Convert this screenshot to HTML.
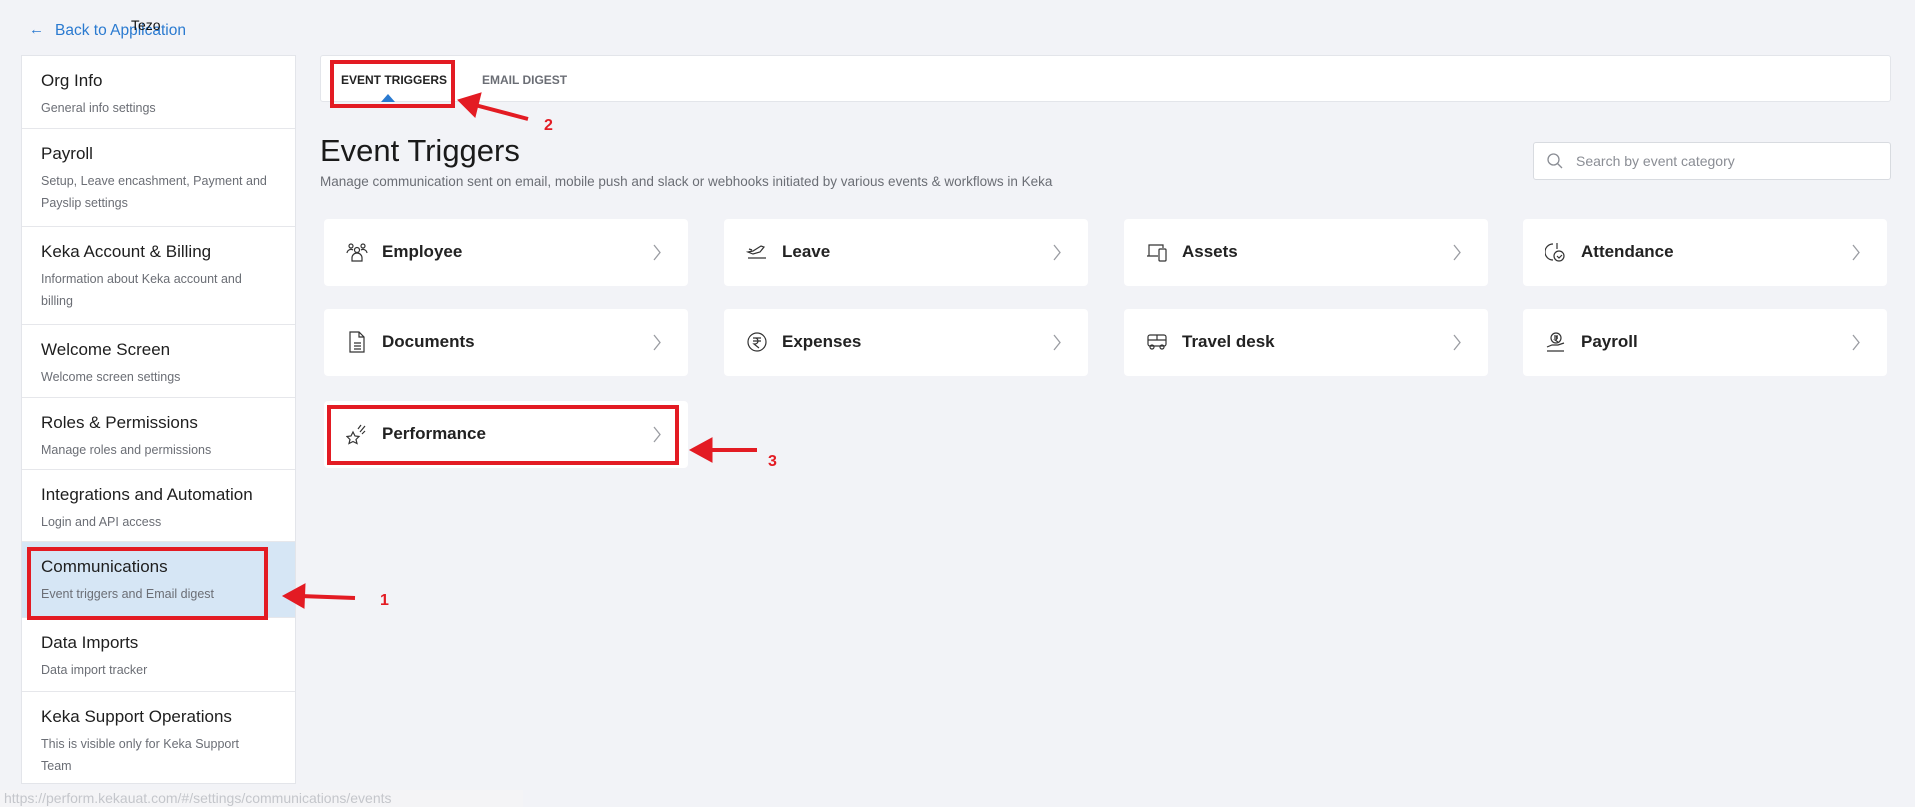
<!DOCTYPE html>
<html><head><meta charset="utf-8"><style>
*{box-sizing:border-box;margin:0;padding:0}
body{width:1915px;height:807px;background:#f2f3f7;font-family:"Liberation Sans",sans-serif;position:relative;overflow:hidden;color:#1f1f1f}
.abs{position:absolute}
.side{left:21px;top:55px;width:275px;height:729px;background:#fff;border:1px solid #e3e5ea}
.it{position:absolute;left:0;width:273px;border-bottom:1px solid #e6e7eb;padding:15px 0 0 19px}
.it .t{font-size:17px;color:#1e1e1e;line-height:20px}
.it .s{font-size:12.5px;color:#6b6e75;line-height:22px;margin-top:6px;width:228px}
.card{position:absolute;background:#fff;border-radius:4px;width:364px;height:67px}
.card .l{position:absolute;left:58px;top:23px;font-size:17px;font-weight:bold;color:#222}
.card .ic{position:absolute;left:22px;top:22px;width:22px;height:22px}
.card .ch{position:absolute;right:26px;top:25px}
.red{position:absolute;border:4px solid #e31b23}
.num{position:absolute;color:#e31b23;font-weight:bold;font-size:16px}
</style></head><body>
<div class="abs" style="left:29px;top:21px;color:#2a7ad0;font-size:15px">&#8592;</div>
<div class="abs" style="left:55px;top:22px;color:#2a7ad0;font-size:15.5px">Back to Application</div>
<div class="abs" style="left:131px;top:17px;color:#111;font-size:14px">Tezo</div>

<div class="abs side">
<div class="it" style="top:0;height:73px"><div class="t">Org Info</div><div class="s">General info settings</div></div>
<div class="it" style="top:73px;height:98px"><div class="t">Payroll</div><div class="s">Setup, Leave encashment, Payment and Payslip settings</div></div>
<div class="it" style="top:171px;height:98px"><div class="t">Keka Account &amp; Billing</div><div class="s">Information about Keka account and billing</div></div>
<div class="it" style="top:269px;height:73px"><div class="t">Welcome Screen</div><div class="s">Welcome screen settings</div></div>
<div class="it" style="top:342px;height:72px"><div class="t">Roles &amp; Permissions</div><div class="s">Manage roles and permissions</div></div>
<div class="it" style="top:414px;height:72px"><div class="t">Integrations and Automation</div><div class="s">Login and API access</div></div>
<div class="it" style="top:486px;height:76px;background:#d6e6f5"><div class="t">Communications</div><div class="s">Event triggers and Email digest</div></div>
<div class="it" style="top:562px;height:74px"><div class="t">Data Imports</div><div class="s">Data import tracker</div></div>
<div class="it" style="top:636px;height:92px;border:none"><div class="t">Keka Support Operations</div><div class="s">This is visible only for Keka Support Team</div></div>
</div>

<div class="abs" style="left:320px;top:55px;width:1571px;height:47px;background:#fff;border:1px solid #e3e5ea;border-radius:3px">
<div class="abs" style="left:20px;top:17px;font-size:12px;font-weight:bold;color:#222">EVENT TRIGGERS</div>
<div class="abs" style="left:161px;top:17px;font-size:12px;font-weight:bold;color:#6b6e75">EMAIL DIGEST</div>
<div class="abs" style="left:60px;top:38px;width:0;height:0;border-left:7px solid transparent;border-right:7px solid transparent;border-bottom:8px solid #2a7ad0"></div>
</div>

<div class="abs" style="left:320px;top:133px;font-size:31px;color:#1a1a1a">Event Triggers</div>
<div class="abs" style="left:320px;top:174px;font-size:13.5px;color:#6b6e75">Manage communication sent on email, mobile push and slack or webhooks initiated by various events &amp; workflows in Keka</div>

<div class="abs" style="left:1533px;top:142px;width:358px;height:38px;background:#fff;border:1px solid #d8dbe0;border-radius:3px">
<svg class="abs" style="left:12px;top:9px" width="18" height="18" viewBox="0 0 18 18" fill="none" stroke="#8a8d94" stroke-width="1.3"><circle cx="7.5" cy="7.5" r="5.5"/><path d="M11.5 11.5L16 16"/></svg>
<div class="abs" style="left:42px;top:10px;font-size:14px;color:#8a8d94">Search by event category</div>
</div>

<div class="card" style="left:324px;top:219px"><svg class="ic" viewBox="0 0 22 22" fill="none" stroke="#333" stroke-width="1.2"><circle cx="5" cy="5" r="2"/><circle cx="17" cy="5" r="2"/><circle cx="11" cy="9" r="2.5"/><path d="M6 20v-3a5 5 0 0 1 10 0v3z"/><path d="M1 12a4 4 0 0 1 6-3M21 12a4 4 0 0 0-6-3"/></svg><div class="l">Employee</div><svg class="ch" width="10" height="17" viewBox="0 0 10 17" fill="none" stroke="#9a9ca2" stroke-width="1.3"><path d="M2 1l6 7.5L2 16"/></svg></div>
<div class="card" style="left:724px;top:219px"><svg class="ic" viewBox="0 0 22 22" fill="none" stroke="#333" stroke-width="1.2"><path d="M2 11l5-1 8-5 3 1-4 5-7 2zM3 8l3 1M2 17h18"/></svg><div class="l">Leave</div><svg class="ch" width="10" height="17" viewBox="0 0 10 17" fill="none" stroke="#9a9ca2" stroke-width="1.3"><path d="M2 1l6 7.5L2 16"/></svg></div>
<div class="card" style="left:1124px;top:219px"><svg class="ic" viewBox="0 0 22 22" fill="none" stroke="#333" stroke-width="1.2"><path d="M3 15V4h14v3M1 15h11"/><rect x="13" y="8" width="7" height="12" rx="1"/></svg><div class="l">Assets</div><svg class="ch" width="10" height="17" viewBox="0 0 10 17" fill="none" stroke="#9a9ca2" stroke-width="1.3"><path d="M2 1l6 7.5L2 16"/></svg></div>
<div class="card" style="left:1523px;top:219px"><svg class="ic" viewBox="0 0 22 22" fill="none" stroke="#333" stroke-width="1.2"><path d="M8 3a8 8 0 0 0 0 16M12 2v6"/><circle cx="14" cy="15" r="5"/><path d="M12 15l2 2 3-3"/></svg><div class="l">Attendance</div><svg class="ch" width="10" height="17" viewBox="0 0 10 17" fill="none" stroke="#9a9ca2" stroke-width="1.3"><path d="M2 1l6 7.5L2 16"/></svg></div>

<div class="card" style="left:324px;top:309px"><svg class="ic" viewBox="0 0 22 22" fill="none" stroke="#333" stroke-width="1.2"><path d="M4 1h9l5 5v15H4zM13 1v5h5M8 12h7M8 15h7M8 18h7"/></svg><div class="l">Documents</div><svg class="ch" width="10" height="17" viewBox="0 0 10 17" fill="none" stroke="#9a9ca2" stroke-width="1.3"><path d="M2 1l6 7.5L2 16"/></svg></div>
<div class="card" style="left:724px;top:309px"><svg class="ic" viewBox="0 0 22 22" fill="none" stroke="#333" stroke-width="1.2"><circle cx="11" cy="11" r="9"/><path d="M7 7h8M7 10h8M9 7a3 3 0 0 1 0 6H8l5 4"/></svg><div class="l">Expenses</div><svg class="ch" width="10" height="17" viewBox="0 0 10 17" fill="none" stroke="#9a9ca2" stroke-width="1.3"><path d="M2 1l6 7.5L2 16"/></svg></div>
<div class="card" style="left:1124px;top:309px"><svg class="ic" viewBox="0 0 22 22" fill="none" stroke="#333" stroke-width="1.2"><rect x="2" y="4" width="18" height="11" rx="2"/><path d="M2 9h18M11 4v5"/><circle cx="6" cy="16" r="2"/><circle cx="16" cy="16" r="2"/></svg><div class="l">Travel desk</div><svg class="ch" width="10" height="17" viewBox="0 0 10 17" fill="none" stroke="#9a9ca2" stroke-width="1.3"><path d="M2 1l6 7.5L2 16"/></svg></div>
<div class="card" style="left:1523px;top:309px"><svg class="ic" viewBox="0 0 22 22" fill="none" stroke="#333" stroke-width="1.2"><circle cx="11" cy="7" r="5"/><path d="M9 5h4M9 7h4M10 5a2 2 0 0 1 0 4l3 2M2 16l5-2h6l6-2M2 20h17"/></svg><div class="l">Payroll</div><svg class="ch" width="10" height="17" viewBox="0 0 10 17" fill="none" stroke="#9a9ca2" stroke-width="1.3"><path d="M2 1l6 7.5L2 16"/></svg></div>

<div class="card" style="left:324px;top:401px"><svg class="ic" viewBox="0 0 22 22" fill="none" stroke="#333" stroke-width="1.2"><path d="M7 9l2 4 4 .5-3 3 1 4-4-2-4 2 1-4-3-3 4-.5zM12 6l3-4M14 9l5-6M16 11l3-3"/></svg><div class="l">Performance</div><svg class="ch" width="10" height="17" viewBox="0 0 10 17" fill="none" stroke="#9a9ca2" stroke-width="1.3"><path d="M2 1l6 7.5L2 16"/></svg></div>

<div class="red" style="left:27px;top:547px;width:241px;height:73px"></div>
<div class="red" style="left:330px;top:60px;width:125px;height:48px"></div>
<div class="red" style="left:327px;top:405px;width:352px;height:60px"></div>
<svg class="abs" style="left:0;top:0" width="1915" height="807">
<g fill="#e31b23" stroke="#e31b23">
<line x1="355" y1="598" x2="300" y2="596" stroke-width="4"/><polygon points="283,596 305,584 304,608"/>
<line x1="528" y1="119" x2="475" y2="105" stroke-width="4"/><polygon points="458,100 481,93 475,117"/>
<line x1="757" y1="450" x2="708" y2="450" stroke-width="4"/><polygon points="690,450 712,438 712,462"/>
</g></svg>
<div class="num" style="left:380px;top:592px">1</div>
<div class="num" style="left:544px;top:117px">2</div>
<div class="num" style="left:768px;top:453px">3</div>

<div class="abs" style="left:0;top:790px;width:523px;height:17px;background:#f4f4f6;color:#c4c6cb;font-size:14px;padding-left:4px;line-height:17px">https://perform.kekauat.com/#/settings/communications/events</div>
</body></html>
